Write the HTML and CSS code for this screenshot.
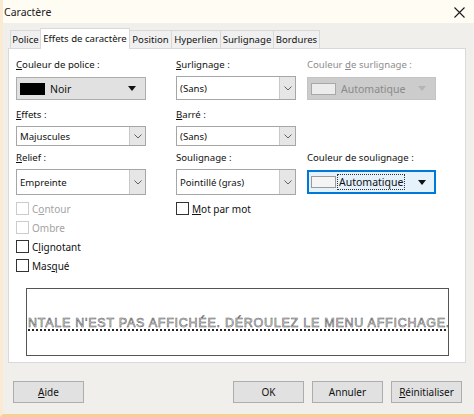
FILE: index.html
```html
<!DOCTYPE html>
<html lang="fr">
<head>
<meta charset="utf-8">
<title>Caractère</title>
<link rel="stylesheet" href="styles.css">
</head>
<body>
<div class="window">
  <div class="titlebar">
    <span class="title">Caractère</span>
    <svg class="close" width="11" height="11" viewBox="0 0 11 11"><path d="M0.5 0.5L10.5 10.5M10.5 0.5L0.5 10.5" stroke="#1a1a1a" stroke-width="1.1" fill="none"/></svg>
  </div>
  <div class="body">
    <div class="tabs">
      <div class="tab t-police">Police</div>
      <div class="tab active t-effets">Effets de caractère</div>
      <div class="tab t-position">Position</div>
      <div class="tab t-hyper">Hyperlien</div>
      <div class="tab t-surl">Surlignage</div>
      <div class="tab t-bord">Bordures</div>
    </div>
    <div class="panel">
      <div class="grid">
        <div class="lbl r1"><u>C</u>ouleur de police :</div>
        <div class="lbl r1"><u>S</u>urlignage :</div>
        <div class="lbl r1 disabled">Couleur <u>d</u>e surlignage :</div>

        <div class="ctl r2"><div class="colorbtn"><span class="swatch black"></span><span class="cname">Noir</span><svg class="tri" width="8" height="5" viewBox="0 0 8 5"><path d="M0 0H8L4 5Z" fill="#111"/></svg></div></div>
        <div class="ctl r2"><div class="select tall"><span class="val">(Sans)</span><span class="arrow"><svg width="8" height="5" viewBox="0 0 8 5"><path d="M0.5 0.5L4 4L7.5 0.5" stroke="#606060" fill="none"/></svg></span></div></div>
        <div class="ctl r2"><div class="colorbtn off"><span class="swatch"></span><span class="cname">Automatique</span><svg class="tri" width="8" height="5" viewBox="0 0 8 5"><path d="M0 0H8L4 5Z" fill="#b4b4b4"/></svg></div></div>

        <div class="lbl r3"><u>E</u>ffets :</div>
        <div class="lbl r3"><u>B</u>arré :</div>
        <div class="lbl r3"></div>

        <div class="ctl r4"><div class="select"><span class="val">Majuscules</span><span class="arrow"><svg width="8" height="5" viewBox="0 0 8 5"><path d="M0.5 0.5L4 4L7.5 0.5" stroke="#606060" fill="none"/></svg></span></div></div>
        <div class="ctl r4"><div class="select"><span class="val">(Sans)</span><span class="arrow"><svg width="8" height="5" viewBox="0 0 8 5"><path d="M0.5 0.5L4 4L7.5 0.5" stroke="#606060" fill="none"/></svg></span></div></div>
        <div class="ctl r4"></div>

        <div class="lbl r5"><u>R</u>elief :</div>
        <div class="lbl r5">Soulignage :</div>
        <div class="lbl r5">Couleur de souli<u>g</u>nage :</div>

        <div class="ctl r6"><div class="select big"><span class="val">Empreinte</span><span class="arrow"><svg width="8" height="5" viewBox="0 0 8 5"><path d="M0.5 0.5L4 4L7.5 0.5" stroke="#606060" fill="none"/></svg></span></div></div>
        <div class="ctl r6"><div class="select big"><span class="val">Pointillé (gras)</span><span class="arrow"><svg width="8" height="5" viewBox="0 0 8 5"><path d="M0.5 0.5L4 4L7.5 0.5" stroke="#606060" fill="none"/></svg></span></div></div>
        <div class="ctl r6"><div class="colorbtn focus"><span class="swatch"></span><span class="cname focused">Automatique</span><svg class="tri" width="8" height="5" viewBox="0 0 8 5"><path d="M0 0H8L4 5Z" fill="#111"/></svg></div></div>

        <div class="checks">
          <div class="chk disabled"><span class="box"></span>C<u>o</u>ntour</div>
          <div class="chk disabled"><span class="box"></span>Ombre</div>
          <div class="chk"><span class="box"></span>C<u>l</u>ignotant</div>
          <div class="chk"><span class="box"></span>Mas<u>q</u>ué</div>
        </div>
        <div class="checks">
          <div class="chk"><span class="box"></span><u>M</u>ot par mot</div>
        </div>
        <div class="checks"></div>
      </div>
      <div class="preview">
        <span class="ptext">NTALE N'EST PAS AFFICHÉE. DÉROULEZ LE MENU AFFICHAGE.</span>
      </div>
    </div>
    <div class="buttons">
      <div class="btn"><u>A</u>ide</div>
      <div class="spacer"></div>
      <div class="btn">OK</div>
      <div class="btn">Annuler</div>
      <div class="btn"><u>R</u>éinitialiser</div>
    </div>
  </div>
</div>
</body>
</html>
```

FILE: styles.css
```css
* { box-sizing: border-box; }
html, body { margin: 0; padding: 0; }
body {
  width: 474px;
  height: 417px;
  overflow: hidden;
  font-family: "Noto Sans", "Open Sans", sans-serif;
  font-size: 9.6px;
  color: #111;
  background: #f0efec;
}
u { text-decoration-thickness: 1px; text-underline-offset: 1px; }
.window {
  width: 474px;
  height: 417px;
  display: flex;
  flex-direction: column;
  border-left: 3px solid #fbead2;
  border-bottom: 3px solid #f6cf94;
  background: #f0efec;
}
.titlebar {
  height: 23px;
  flex: none;
  display: flex;
  align-items: center;
  justify-content: space-between;
  padding: 0 9px 0 1px;
  background: #fffcf3;
  font-size: 10.5px;
}
.title { color: #222; }
.close { margin-top: 1px; }
.body {
  flex: 1;
  display: flex;
  flex-direction: column;
  padding: 5px 8px 0 5px;
}
.tabs {
  display: flex;
  align-items: flex-end;
  height: 20px;
  padding-left: 2px;
  position: relative;
  z-index: 1;
}
.tab {
  height: 18px;
  line-height: 17px;
  padding: 0;
  text-align: center;
  border: 1px solid #d9d9d9;
  border-bottom: none;
  background: #f0f0f0;
  margin-right: -1px;
  white-space: nowrap;
  color: #111;
}
.tab.active {
  height: 21px;
  line-height: 19px;
  background: #fff;
  margin-bottom: -1px;
  border-color: #d9d9d9;
}
.t-police { width: 31px; }
.t-effets { width: 90px; }
.t-position { width: 43px; }
.t-hyper { width: 50px; }
.t-surl { width: 54px; }
.t-bord { width: 47px; }
.panel {
  width: 458px;
  height: 315px;
  background: #fff;
  border: 1px solid #d9d9d9;
  padding: 9px 0 0 7px;
  display: flex;
  flex-direction: column;
}
.grid {
  display: grid;
  grid-template-columns: 130px 120px 129px;
  column-gap: 30px;
  grid-template-rows: 14px 28px 22px 24px 19px 30px auto;
}
.lbl {
  height: 14px;
  line-height: 14px;
  align-self: end;
  white-space: nowrap;
}
.grid > div:nth-child(3n+3) { margin-left: -19px; margin-right: 19px; }
.lbl.disabled { color: #8d8d8d; }
.ctl { align-self: end; }
.select {
  height: 20px;
  border: 1px solid #a6a6a6;
  background: #fff;
  display: flex;
  align-items: center;
  justify-content: space-between;
  padding-left: 3px;
}
.select.tall { height: 24px; }
.select.big { height: 26px; }
.select .val { white-space: nowrap; }
.select .arrow {
  width: 16px;
  height: 100%;
  background: #e6e6e6;
  border-left: 1px solid #c8c8c8;
  display: flex;
  align-items: center;
  justify-content: center;
}
.colorbtn {
  height: 23px;
  border: 1px solid #adadad;
  background: #e1e1e1;
  display: flex;
  align-items: center;
  padding: 0 9px 0 3px;
}
.colorbtn .swatch {
  width: 25px;
  height: 12px;
  background: #f4f4f4;
  border: 1px solid #9a9a9a;
  flex: none;
}
.colorbtn .swatch.black { background: #000; border-color: #000; }
.colorbtn .cname { margin-left: 5px; flex: 1; font-size: 10.5px; }
.colorbtn.off { background: #cccccc; border-color: #c4c4c4; color: #8a8a8a; }
.colorbtn.off .swatch { background: #ececec; border-color: #a8a8a8; }
.colorbtn.focus {
  height: 24px;
  margin-bottom: 1px;
  border: 1px solid #0078d7;
  background: #e5f1fb;
  box-shadow: inset 0 0 0 1px #0078d7;
}
.colorbtn .cname.focused {
  flex: none;
  margin-left: 2px;
  margin-right: auto;
  padding: 0 1px;
  outline: 1px dotted #333;
  line-height: 14px;
}
.checks {
  padding-top: 4px;
  display: flex;
  flex-direction: column;
}
.chk {
  height: 19px;
  display: flex;
  align-items: center;
  white-space: nowrap;
  font-size: 10px;
}
.chk .box {
  width: 13px;
  height: 13px;
  border: 1px solid #333;
  background: #fff;
  margin-right: 3px;
  flex: none;
}
.chk.disabled { color: #a3a3a3; }
.chk.disabled .box { border-color: #cccccc; }
.preview {
  margin-top: 13px;
  margin-left: 10px;
  width: 423px;
  height: 68px;
  border: 1px solid #555;
  background: #fff;
  overflow: hidden;
  display: flex;
  align-items: center;
  padding-left: 1px;
}
.ptext {
  white-space: nowrap;
  font-family: "Liberation Sans", sans-serif;
  font-size: 12.5px;
  letter-spacing: 0.75px;
  color: #fdfdfd;
  -webkit-text-stroke: 0.55px #555;
  text-decoration: underline dotted #222;
  text-decoration-thickness: 2px;
  text-underline-offset: 3px;
  margin-top: 1px;
}
.buttons {
  display: flex;
  margin-top: 18px;
  padding: 0 4px 0 5px;
  gap: 8px;
}
.spacer { flex: 1; }
.btn {
  width: 71px;
  height: 22px;
  border: 1px solid #adadad;
  background: #e1e1e1;
  display: flex;
  align-items: center;
  justify-content: center;
  color: #111;
  font-size: 10px;
}
```
